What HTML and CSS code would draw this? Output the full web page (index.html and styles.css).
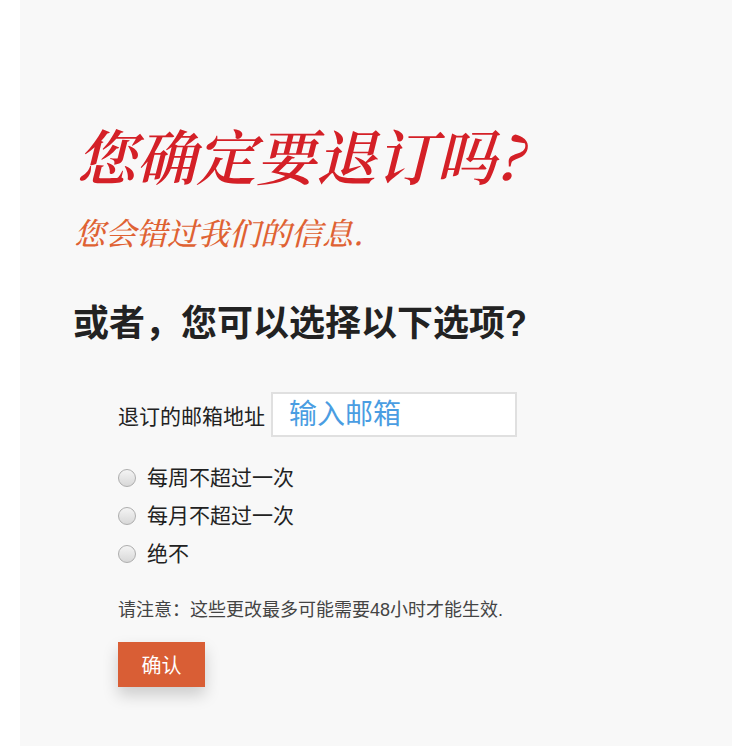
FILE: index.html
```html
<!DOCTYPE html>
<html lang="zh-CN">
<head>
<meta charset="utf-8">
<title>退订</title>
<link rel="stylesheet" href="styles.css">
</head>
<body>
<main class="panel">
  <h1 class="title">您确定要退订吗?</h1>
  <p class="subtitle">您会错过我们的信息.</p>
  <h2 class="question">或者，您可以选择以下选项?</h2>
  <form class="form">
    <div class="email-row">
      <label class="email-label" for="email">退订的邮箱地址</label>
      <input class="email-input" id="email" type="text" placeholder="输入邮箱">
    </div>
    <ul class="options">
      <li class="option"><input class="radio" type="radio" name="freq" id="r1"><label for="r1">每周不超过一次</label></li>
      <li class="option"><input class="radio" type="radio" name="freq" id="r2"><label for="r2">每月不超过一次</label></li>
      <li class="option"><input class="radio" type="radio" name="freq" id="r3"><label for="r3">绝不</label></li>
    </ul>
    <p class="note">请注意：这些更改最多可能需要48小时才能生效.</p>
    <button class="confirm" type="button">确认</button>
  </form>
</main>
</body>
</html>
```
FILE: styles.css
```css
html, body {
  margin: 0;
  padding: 0;
  background: #ffffff;
}
body {
  font-family: "Liberation Sans", "Noto Sans CJK SC", sans-serif;
  color: #222;
}
.panel {
  margin-left: 20px;
  background: #f8f8f8;
  min-height: 746px;
  padding: 118px 0 0 56px;
  box-sizing: border-box;
}
.title {
  margin: 0;
  font-family: "Noto Serif CJK SC", "Liberation Serif", "Noto Sans CJK SC", serif;
  font-style: italic;
  font-weight: 600;
  font-size: 60px;
  line-height: 72px;
  color: #d42027;
}
.subtitle {
  margin: 22px 0 0 -2px;
  font-family: "Noto Serif CJK SC", "Liberation Serif", "Noto Sans CJK SC", serif;
  font-style: italic;
  font-weight: 500;
  font-size: 31px;
  line-height: 40px;
  color: #df6233;
}
.question {
  margin: 48px 0 0 -3px;
  font-size: 36px;
  line-height: 48px;
  font-weight: bold;
  color: #222;
}
.form {
  margin: 44px 0 0 42px;
}
.email-row {
  display: flex;
  align-items: center;
  gap: 6px;
}
.email-label {
  font-size: 21px;
  color: #222;
}
.email-input {
  width: 246px;
  height: 45px;
  box-sizing: border-box;
  border: 2px solid #e0e0e0;
  background: #fff;
  padding: 0 16px;
  font-size: 28px;
  font-family: "Liberation Sans", "Noto Sans CJK SC", sans-serif;
  outline: none;
}
.email-input::placeholder {
  color: #4a9de2;
}
.options {
  list-style: none;
  margin: 26px 0 0 0;
  padding: 0;
  display: flex;
  flex-direction: column;
  gap: 9px;
}
.option {
  display: flex;
  align-items: center;
  gap: 11px;
  font-size: 21px;
  line-height: 29px;
  color: #222;
}
.radio {
  appearance: none;
  -webkit-appearance: none;
  margin: 0;
  width: 18px;
  height: 18px;
  border-radius: 50%;
  border: 1px solid #adadad;
  background: linear-gradient(#f4f4f4, #d8d8d8);
  box-sizing: border-box;
}
.note {
  margin: 30px 0 0 0;
  font-size: 18px;
  line-height: 24px;
  color: #444;
}
.confirm {
  margin-top: 20px;
  width: 87px;
  height: 45px;
  border: none;
  background: #d95e35;
  color: #fff;
  font-size: 20px;
  font-family: "Liberation Sans", "Noto Sans CJK SC", sans-serif;
  box-shadow: 0 8px 16px rgba(0, 0, 0, 0.18);
  padding: 0;
}
```
